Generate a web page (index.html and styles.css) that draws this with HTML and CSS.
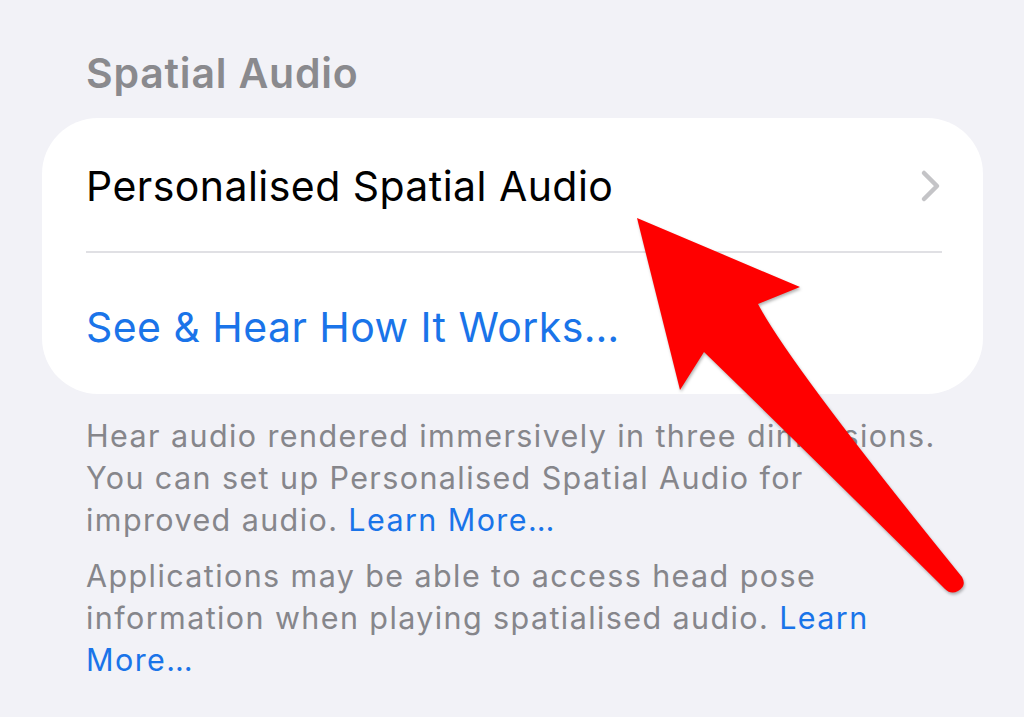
FILE: index.html
```html
<!DOCTYPE html>
<html lang="en">
<head>
    <meta charset="UTF-8">
    <meta name="viewport" content="width=device-width, initial-scale=1.0">
    <title>Spatial Audio</title>
    <link rel="stylesheet" href="styles.css">
</head>
<body>
    <div class="page">
        <h2 class="section-title">Spatial Audio</h2>
        <div class="group">
            <div class="row row-first">
                <span class="row-label">Personalised Spatial Audio</span>
                <svg class="chevron" width="22" height="34" viewBox="0 0 22 34">
                    <path d="M4 4 L17 17 L4 30" fill="none" stroke="#c4c4c7" stroke-width="4.5" stroke-linecap="round" stroke-linejoin="round"/>
                </svg>
            </div>
            <div class="row row-last">
                <span class="row-label link">See &amp; Hear How It Works…</span>
            </div>
        </div>
        <div class="footer">
            <p>Hear audio rendered immersively in three dimensions.<br>You can set up Personalised Spatial Audio for<br>improved audio. <span class="link">Learn More…</span></p>
            <p>Applications may be able to access head pose<br>information when playing spatialised audio. <span class="link">Learn<br>More…</span></p>
        </div>
    </div>

    <!-- red annotation arrow drawn over the settings -->
    <svg class="arrow" width="1024" height="717" viewBox="0 0 1024 717">
        <path d="M637 218 L800 287 L758 304 Q790 365 962 577 Q967 586 958 591 Q951 595 945 589 Q800 445 704 352 L680 390 Z" fill="#ff0000"/>
    </svg>
</body>
</html>
```

FILE: styles.css
```css
body {
    margin: 0;
    background-color: #f2f2f7;
    font-family: Inter, "Noto Sans", sans-serif;
    overflow: hidden;
}

.page {
    padding-top: 48px;
    height: 669px;
}

.section-title {
    margin: 0 0 20px 86px;
    font-size: 41px;
    line-height: 50px;
    font-weight: 600;
    letter-spacing: 0.8px;
    color: #8a8a8e;
}

.group {
    margin: 0 41px 0 42px;
    padding: 0 41px 0 44px;
    background-color: #fff;
    border-radius: 56px;
}

.row {
    display: flex;
    align-items: center;
    justify-content: space-between;
}

.row-first {
    padding: 43px 0 40px 0;
    border-bottom: 2px solid #e0e0e4;
}

.row-last {
    padding: 49px 0 42px 0;
}

.row-label {
    font-size: 41px;
    line-height: 50px;
    letter-spacing: 0.45px;
    color: #000;
}

.link {
    color: #1a74e9;
}

.footer {
    padding: 21px 0 0 86px;
}

.footer p {
    margin: 0 0 14px 0;
    font-size: 30.5px;
    line-height: 42px;
    letter-spacing: 1.4px;
    color: #86868b;
    white-space: nowrap;
}

.arrow {
    position: absolute;
    top: 0;
    left: 0;
    filter: drop-shadow(1px 2px 1.5px rgba(0, 0, 0, 0.3));
}
```
